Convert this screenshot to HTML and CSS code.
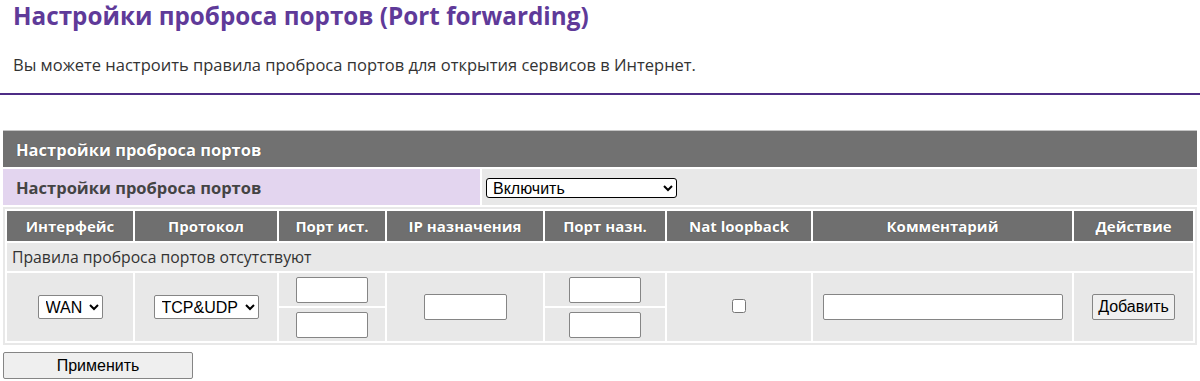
FILE: index.html
```html
<!DOCTYPE html>
<html lang="ru">
<head>
<meta charset="utf-8">
<title>Port forwarding</title>
<link rel="stylesheet" href="styles.css">
</head>
<body>
<div class="page-head">
  <h1 class="title">Настройки проброса портов (Port forwarding)</h1>
  <p class="desc">Вы можете настроить правила проброса портов для открытия сервисов в Интернет.</p>
</div>
<table class="outer">
  <tr>
    <td class="bar" colspan="2">Настройки проброса портов</td>
  </tr>
  <tr>
    <td class="label">Настройки проброса портов</td>
    <td class="value"><select class="enable-select"><option>Включить</option><option>Выключить</option></select></td>
  </tr>
  <tr>
    <td class="holder" colspan="2">
      <table class="rules">
        <colgroup>
          <col class="c1"><col class="c2"><col class="c3"><col class="c4"><col class="c5"><col class="c6"><col class="c7"><col class="c8">
        </colgroup>
        <tr class="head">
          <th>Интерфейс</th>
          <th>Протокол</th>
          <th>Порт ист.</th>
          <th>IP назначения</th>
          <th>Порт назн.</th>
          <th>Nat loopback</th>
          <th>Комментарий</th>
          <th>Действие</th>
        </tr>
        <tr class="empty">
          <td colspan="8">Правила проброса портов отсутствуют</td>
        </tr>
        <tr class="add">
          <td rowspan="2"><select class="sel-if"><option>WAN</option></select></td>
          <td rowspan="2"><select class="sel-proto"><option>TCP&amp;UDP</option></select></td>
          <td class="half"><input type="text" class="port"></td>
          <td rowspan="2"><input type="text" class="ip"></td>
          <td class="half"><input type="text" class="port"></td>
          <td rowspan="2"><input type="checkbox" class="chk"></td>
          <td rowspan="2"><input type="text" class="comment"></td>
          <td rowspan="2"><button class="add-btn" type="button">Добавить</button></td>
        </tr>
        <tr class="add">
          <td class="half"><input type="text" class="port"></td>
          <td class="half"><input type="text" class="port"></td>
        </tr>
      </table>
    </td>
  </tr>
</table>
<div class="actions">
  <button class="apply-btn" type="button">Применить</button>
</div>
</body>
</html>
```
FILE: styles.css
```css
html, body {
  margin: 0;
  padding: 0;
  background: #ffffff;
}
body {
  font-family: "Open Sans", "Noto Sans", sans-serif;
  color: #333333;
}
.page-head {
  padding: 0 0 0 13px;
  border-bottom: 2px solid #4e2c86;
  box-sizing: border-box;
  height: 95px;
}
.title {
  margin: 0;
  font-size: 24.25px;
  line-height: 32px;
  font-weight: 700;
  color: #5f3a99;
}
.desc {
  margin: 22px 0 0 0;
  font-size: 16.5px;
  line-height: 22px;
  color: #333333;
}
.outer {
  margin: 33px 0 0 1px;
  width: 1198px;
  border-collapse: separate;
  border-spacing: 2px;
}
.outer td {
  padding: 0;
}
.bar {
  background: #717171;
  color: #ffffff;
  font-weight: 700;
  font-size: 16.5px;
  height: 36px;
  padding-left: 13px !important;
  border-top: 1px solid #c4c4c4;
  text-shadow: 0 0 1px rgba(0,0,0,0.5);
}
.label {
  background: #e3d5ef;
  color: #444444;
  font-weight: 700;
  font-size: 16.5px;
  width: 464px;
  height: 36px;
  padding-left: 13px !important;
}
.value {
  background: #e8e8e8;
  padding-left: 4px !important;
}
select, input, button {
  font-family: "Liberation Sans", Arial, sans-serif;
  font-size: 16px;
  color: #000000;
  box-sizing: border-box;
}
.enable-select {
  width: 191px;
  height: 20px;
  border: 1px solid #000000;
  border-radius: 3px;
  background: #ffffff;
  padding: 0 0 0 2px;
  display: block;
  margin-top: 1px;
}
.holder {
  background: #e8e8e8;
  padding: 2px !important;
}
.rules {
  width: 1190px;
  table-layout: fixed;
  border-collapse: separate;
  border-spacing: 2px;
  background: #ffffff;
}
.c1 { width: 126px; }
.c2 { width: 142px; }
.c3 { width: 106px; }
.c4 { width: 156px; }
.c5 { width: 120px; }
.c6 { width: 144px; }
.c7 { width: 259px; }
.c8 { width: 119px; }
.rules th {
  background: #6f6f6f;
  color: #ffffff;
  font-weight: 700;
  font-size: 15px;
  height: 30px;
  padding: 0;
  text-align: center;
  text-shadow: 0 0 1px rgba(0,0,0,0.5);
}
.rules td {
  background: #e8e8e8;
  padding: 0;
  text-align: center;
  vertical-align: middle;
}
.empty td {
  text-align: left;
  font-size: 15.75px;
  height: 28px;
  padding-left: 5px;
  color: #333333;
}
.add .half {
  height: 33px;
}
.sel-if,
.sel-proto {
  height: 24px;
  border: 1px solid #858585;
  border-radius: 2px;
  background: #ffffff;
  padding: 0 0 0 3px;
}
.sel-if { width: 65px; }
.sel-proto { width: 105px; }
.port {
  width: 72px;
  height: 26px;
}
.ip {
  width: 83px;
  height: 26px;
}
.comment {
  width: 240px;
  height: 26px;
}
.chk {
  width: 14px;
  height: 14px;
  margin: 0;
}
input[type="text"] {
  border: 1px solid #858585;
  border-radius: 2px;
  background: #ffffff;
  padding: 1px 2px;
}
.add-btn {
  width: 83px;
  height: 26px;
  padding: 0;
  border: 1px solid #858585;
  border-radius: 2px;
  background: #f0f0f0;
}
.actions {
  padding: 5px 0 0 3px;
}
.apply-btn {
  width: 190px;
  height: 27px;
  padding: 0;
  border: 1px solid #858585;
  border-radius: 2px;
  background: #efefef;
}
```
